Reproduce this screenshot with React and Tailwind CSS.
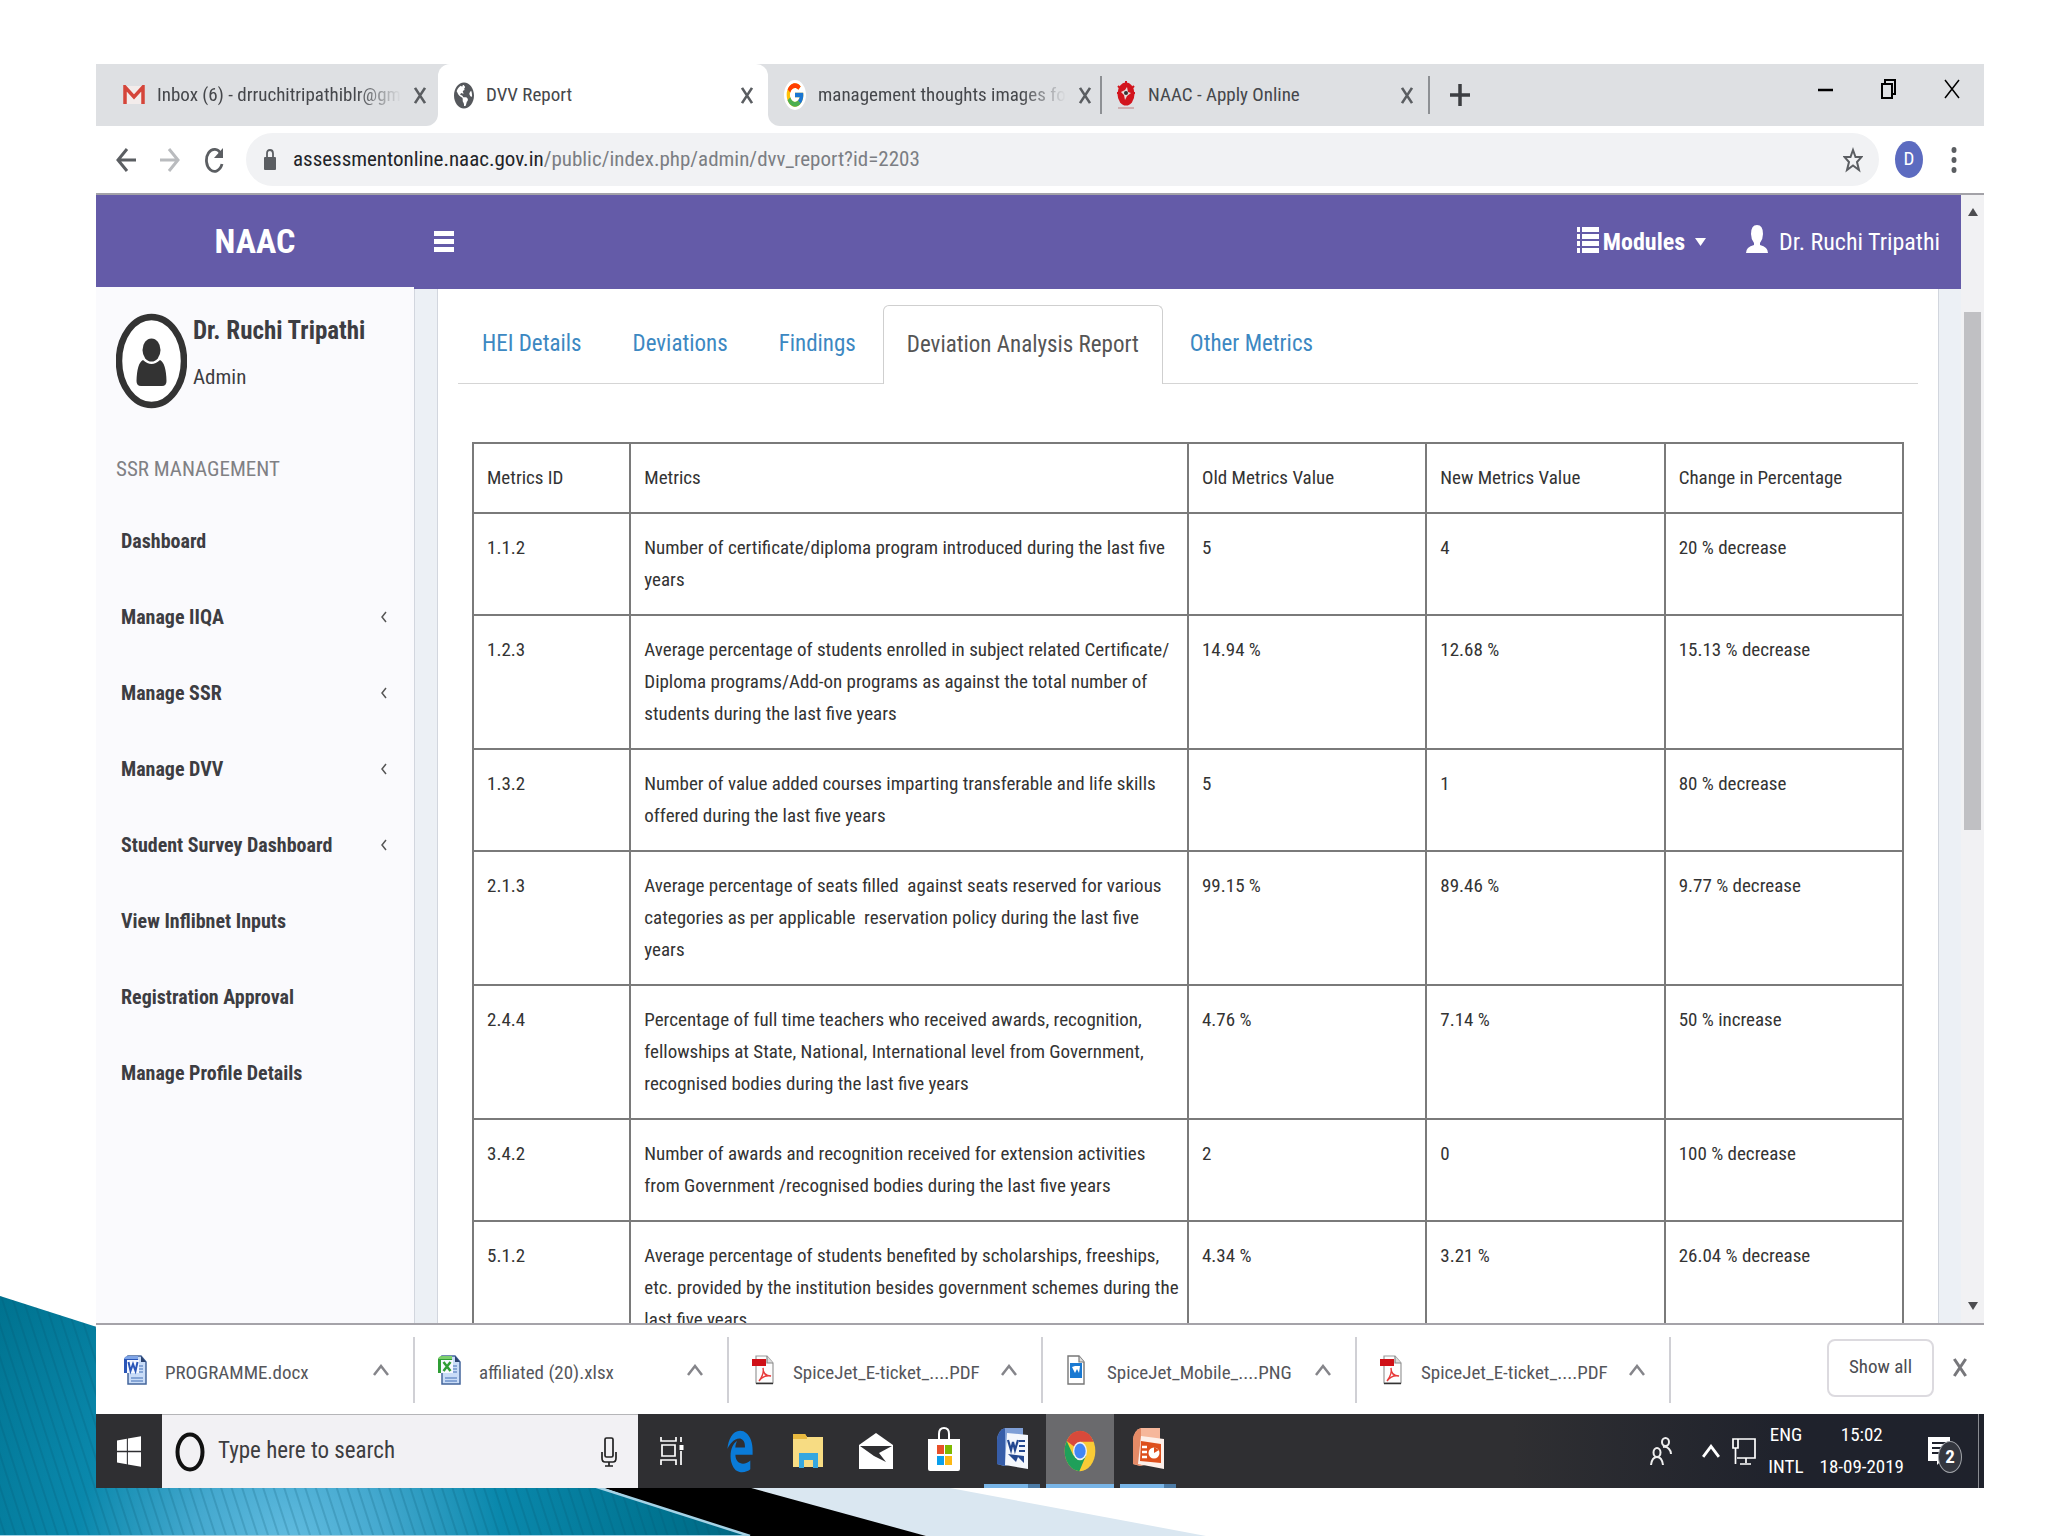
import { useState } from 'react'
import { FcGoogle } from 'react-icons/fc'
import { FaEdgeLegacy, FaGlobeAmericas, FaWindows } from 'react-icons/fa'

const sidebarItems = [
    { label: "Dashboard" },
    { label: "Manage IIQA", children: true },
    { label: "Manage SSR", children: true },
    { label: "Manage DVV", children: true },
    { label: "Student Survey Dashboard", children: true },
    { label: "View Inflibnet Inputs" },
    { label: "Registration Approval" },
    { label: "Manage Profile Details" },
]

const reportTabs = ["HEI Details", "Deviations", "Findings", "Deviation Analysis Report", "Other Metrics"]

const metrics = [
    { id: "1.1.2", name: "Number of certificate/diploma program introduced during the last five years", before: "5", after: "4", change: "20 % decrease" },
    { id: "1.2.3", name: "Average percentage of students enrolled in subject related Certificate/ Diploma programs/Add-on programs as against the total number of students during the last five years", before: "14.94 %", after: "12.68 %", change: "15.13 % decrease" },
    { id: "1.3.2", name: "Number of value added courses imparting transferable and life skills offered during the last five years", before: "5", after: "1", change: "80 % decrease" },
    { id: "2.1.3", name: "Average percentage of seats filled  against seats reserved for various categories as per applicable  reservation policy during the last five years", before: "99.15 %", after: "89.46 %", change: "9.77 % decrease" },
    { id: "2.4.4", name: "Percentage of full time teachers who received awards, recognition, fellowships at State, National, International level from Government, recognised bodies during the last five years", before: "4.76 %", after: "7.14 %", change: "50 % increase" },
    { id: "3.4.2", name: "Number of awards and recognition received for extension activities from Government /recognised bodies during the last five years", before: "2", after: "0", change: "100 % decrease" },
    { id: "5.1.2", name: "Average percentage of students benefited by scholarships, freeships, etc. provided by the institution besides government schemes during the last five years", before: "4.34 %", after: "3.21 %", change: "26.04 % decrease" },
]

const downloads = [
    { name: "PROGRAMME.docx", icon: <OfficeFileIcon letter="W" color="#2a56b8" light="#7ea4e6" /> },
    { name: "affiliated (20).xlsx", icon: <OfficeFileIcon letter="X" color="#2f9e35" light="#7ccf6c" /> },
    { name: "SpiceJet_E-ticket_....PDF", icon: <PdfIcon /> },
    { name: "SpiceJet_Mobile_....PNG", icon: <PngIcon /> },
    { name: "SpiceJet_E-ticket_....PDF", icon: <PdfIcon /> },
]

function OfficeFileIcon({ letter, color, light }) {
    return (
        <svg className="h-[30px] w-6 shrink-0" viewBox="0 0 24 30" aria-hidden="true">
            <path d="M5 1H18L23 7V29H5Z" fill="#c9dcf7" stroke="#44659c" strokeWidth="1.5" />
            <path d="M18 1V7H23Z" fill="#2b4370" />
            <path d="M15 11H20M15 14H20M15 17H20M8 23H20M8 26H20" stroke="#6f93cc" strokeWidth="1.3" />
            <path d="M1 4Q2 1 6 1H15V18H1Z" fill={color} />
            <path d="M1 4Q2 1 6 1H15V4Z" fill={light} />
            <rect x="4" y="5" width="12" height="13" fill="#f6f9ff" />
            {letter == "W"
                ? <path d="M5.500 7L7.500 16L10 9L12.500 16L14.500 7" fill="none" stroke={color} strokeWidth="2" />
                : <path d="M6.500 7L13.500 16M13.500 7L6.500 16" fill="none" stroke={color} strokeWidth="2.500" />}
        </svg>
    )
}

function PdfIcon() {
    return (
        <svg className="h-[30px] w-6 shrink-0" viewBox="0 0 24 30" aria-hidden="true">
            <path d="M5 1H16L22 8V28H5Z" fill="#fdfdfd" stroke="#999" strokeWidth="1.2" />
            <path d="M16 1V8H22" fill="#ddd" stroke="#888" strokeWidth="1.2" />
            <path d="M5 28.500H22" stroke="#333" strokeWidth="1.500" />
            <rect x="1" y="4" width="14" height="7" fill="#cf1017" />
            <path d="M8 26C11 22 13 17 12 13C12 18 15 21 20 21C15 20 11 22 8 26Z" fill="none" stroke="#e83a3a" strokeWidth="1.400" />
        </svg>
    )
}

function PngIcon() {
    return (
        <svg className="h-[30px] w-6 shrink-0" viewBox="0 0 24 30" aria-hidden="true">
            <path d="M3 1H14L19 7V29H3Z" fill="#fff" stroke="#777" strokeWidth="1.400" />
            <path d="M14 1V7H19" fill="#ddd" stroke="#777" strokeWidth="1.200" />
            <rect x="5" y="8" width="12" height="15" fill="#1979d2" />
            <path d="M7 12L10 11L15 11L14 18L12 14L10 18Z" fill="#fff" />
        </svg>
    )
}

function CloseIcon({ className }) {
    return (
        <svg className={className} viewBox="0 0 14 18" preserveAspectRatio="none" fill="none" stroke="currentColor" aria-hidden="true">
            <path d="M2 1L12 17M12 1L2 17" strokeWidth="2.600" />
        </svg>
    )
}

function CaretUp({ className }) {
    return (
        <svg className={className} viewBox="0 0 16 12" preserveAspectRatio="none" fill="none" stroke="currentColor" aria-hidden="true">
            <path d="M1 11L8 2L15 11" strokeWidth="2.500" />
        </svg>
    )
}

function SlideBackground() {
    return (
        <svg className="absolute bottom-0 left-0 h-60 w-[1210px]" viewBox="0 0 1210 240" aria-hidden="true">
            <defs>
                <radialGradient id="teal" gradientUnits="userSpaceOnUse" cx="290" cy="250" r="470">
                    <stop offset="0" stopColor="#62bce0" />
                    <stop offset="0.2" stopColor="#45a9cf" />
                    <stop offset="0.45" stopColor="#0a88ac" />
                    <stop offset="0.8" stopColor="#007390" />
                    <stop offset="1" stopColor="#006680" />
                </radialGradient>
                <pattern id="stripes" width="10" height="10" patternUnits="userSpaceOnUse" patternTransform="rotate(-18)">
                    <path d="M1 0V10" stroke="#03506a" strokeOpacity="0.3" strokeWidth="1.300" />
                </pattern>
            </defs>
            <path d="M730 192L926 240H1206L950 192Z" fill="#dae7f1" />
            <path d="M590 187H733L926 240H740Z" fill="#000" />
            <path d="M0 0L750 240H0Z" fill="url(#teal)" />
            <path d="M0 0L750 240H0Z" fill="url(#stripes)" />
            <path d="M96 31L750 240" stroke="#a5d3e6" strokeWidth="2.500" />
            <path d="M0 239.500H750" stroke="#9fd0e3" />
        </svg>
    )
}

function BrowserTab({ icon, title, faded }) {
    return (
        <>
            {icon}
            <span className={faded ? "flex-1 whitespace-nowrap [mask-image:linear-gradient(to_right,black_82%,transparent)]" : "flex-1 whitespace-nowrap"}>{title}</span>
            <button aria-label={"Close " + title}><CloseIcon className="h-[17px] w-[14px] text-[#5a5d61]" /></button>
        </>
    )
}

function TabStrip() {
    return (
        <div className="flex h-[62px] shrink-0 bg-white text-[19px] text-[#45474b]">
            <div className="flex w-[342px] items-center gap-3 rounded-br-xl bg-[#dee0e3] pr-[14px] pl-[27px]">
                <BrowserTab faded title="Inbox (6) - drruchitripathiblr@gm" icon={
                    <svg className="h-[20px] w-[22px] shrink-0" viewBox="0 0 22 20" aria-hidden="true">
                        <path d="M2 1H20V19H2Z" fill="#f3eceb" />
                        <path d="M2 19V2L11 12L20 2V19" fill="none" stroke="#d5453a" strokeWidth="3.500" />
                    </svg>
                } />
            </div>
            <div className="w-[330px] bg-[#dee0e3]">
                <div className="flex h-full items-center gap-3 rounded-t-xl bg-white pr-[14px] pl-4">
                    <BrowserTab title="DVV Report" icon={<FaGlobeAmericas className="h-[27px] w-5 shrink-0 text-[#55585c]" preserveAspectRatio="none" />} />
                </div>
            </div>
            <div className="flex flex-1 rounded-bl-xl bg-[#dee0e3]">
                <div className="flex w-[332px] items-center gap-3 pr-[15px] pl-4">
                    <BrowserTab faded title="management thoughts images fo" icon={
                        <span className="flex h-[30px] w-[22px] shrink-0 items-center justify-center rounded-[50%] bg-white"><FcGoogle className="h-[28px] w-[20px]" preserveAspectRatio="none" /></span>
                    } />
                </div>
                <div className="my-3 flex w-[330px] items-center gap-3 border-x-2 border-[#8d9094] px-[14px]">
                    <BrowserTab title="NAAC - Apply Online" icon={
                        <svg className="h-7 w-5 shrink-0" viewBox="0 0 20 28" aria-hidden="true">
                            <ellipse cx="10" cy="13" rx="8.500" ry="11.500" fill="#d2141d" />
                            <path d="M10 0V3M2 5L4 7M18 5L16 7M1 12H3M17 12H19" stroke="#d2141d" strokeWidth="2" />
                            <path d="M5 11L9 9L11 6L12 11L15 12L11 15L9 19L8 14Z" fill="#e9dcdc" />
                            <circle cx="10" cy="12" r="2" fill="#333" />
                            <path d="M2 27H18" stroke="#c9a0a2" strokeWidth="1.500" />
                        </svg>
                    } />
                </div>
                <button className="ml-5 self-center" aria-label="New tab">
                    <svg className="h-[22px] w-5" viewBox="0 0 20 22" aria-hidden="true"><path d="M10 0V22M0 11H20" stroke="#3c3e42" strokeWidth="3.500" /></svg>
                </button>
                <div className="mr-6 mb-3 ml-auto flex items-center gap-12 text-black">
                    <button aria-label="Minimize"><svg className="h-5 w-[15px]" viewBox="0 0 15 20" aria-hidden="true"><path d="M0 11H15" stroke="#000" strokeWidth="2.500" /></svg></button>
                    <button aria-label="Restore">
                        <svg className="h-5 w-[15px]" viewBox="0 0 15 20" fill="none" stroke="#000" strokeWidth="2" aria-hidden="true">
                            <path d="M1 5H11V19H1ZM4 5V1H14V15H11" />
                        </svg>
                    </button>
                    <button aria-label="Close"><svg className="h-5 w-[16px]" viewBox="0 0 16 20" aria-hidden="true"><path d="M1 1L15 19M15 1L1 19" stroke="#000" strokeWidth="1.500" /></svg></button>
                </div>
            </div>
        </div>
    )
}

function Toolbar() {
    const [path, setPath] = useState("/public/index.php/admin/dvv_report?id=2203")

    return (
        <div className="flex h-[69px] shrink-0 items-center border-b-2 border-[#a3a2a8] bg-white pl-5">
            <button aria-label="Back">
                <svg className="h-[26px] w-5" viewBox="0 0 20 26" fill="none" stroke="#5b5e62" strokeWidth="3" aria-hidden="true"><path d="M20 13H2M11 2L2 13L11 24" /></svg>
            </button>
            <button className="ml-6" aria-label="Forward">
                <svg className="h-[26px] w-5" viewBox="0 0 20 26" fill="none" stroke="#b9bbbe" strokeWidth="3" aria-hidden="true"><path d="M0 13H18M9 2L18 13L9 24" /></svg>
            </button>
            <button className="ml-6" aria-label="Reload">
                <svg className="h-[26px] w-5" viewBox="0 0 20 26" fill="none" aria-hidden="true">
                    <path d="M17 7A8 11 0 1 0 18 17" stroke="#5b5e62" strokeWidth="2.800" />
                    <path d="M19 1V11H10Z" fill="#5b5e62" />
                </svg>
            </button>
            <div className="ml-[22px] flex h-[53px] flex-1 items-center rounded-full bg-[#f1f2f4] pr-4 pl-[18px] text-[21px]">
                <svg className="mr-[17px] h-[22px] w-3 shrink-0" viewBox="0 0 12 22" aria-hidden="true">
                    <rect x="0" y="8" width="12" height="13" rx="1" fill="#5b5e62" />
                    <path d="M3 9V4.500Q3 1 6 1T9 4.500V9" fill="none" stroke="#5b5e62" strokeWidth="1.800" />
                </svg>
                <label htmlFor="address" className="text-[#222428]">assessmentonline.naac.gov.in</label>
                <input id="address" className="flex-1 bg-transparent text-[#7b7e83] outline-none" value={path} onChange={(e) => setPath(e.target.value)} />
                <button aria-label="Bookmark this page">
                    <svg className="h-[26px] w-5" viewBox="0 0 20 26" fill="none" stroke="#5b5e62" strokeWidth="2" aria-hidden="true"><path d="M10 3L12.500 10H18.500L14 15L16 23L10 18.500L4 23L6 15L1.500 10H7.500Z" /></svg>
                </button>
            </div>
            <button className="ml-4 h-[37px] w-7 rounded-[50%] bg-[#5c6bc0] text-[19px] text-white">D</button>
            <button className="mr-[27px] ml-7" aria-label="Menu">
                <svg className="h-[26px] w-[6px]" viewBox="0 0 6 26" fill="#5b5e62" aria-hidden="true"><ellipse cx="3" cy="3" rx="2.500" ry="3" /><ellipse cx="3" cy="13" rx="2.500" ry="3" /><ellipse cx="3" cy="23" rx="2.500" ry="3" /></svg>
            </button>
        </div>
    )
}

function Sidebar() {
    return (
        <aside className="flex w-[318px] shrink-0 flex-col bg-[#fafafd]">
            <a href="#" className="flex h-[92px] shrink-0 items-center justify-center bg-[#645ba8] text-[34px] font-bold text-white">NAAC</a>
            <div className="flex flex-col pt-[26px] pl-5 text-[#3d3d42]">
                <div className="flex gap-[6px]">
                    <svg className="h-24 w-[71px]" viewBox="0 0 71 96" aria-hidden="true">
                        <ellipse cx="35.500" cy="48" rx="32.500" ry="44" fill="#fff" stroke="#333" strokeWidth="6.500" />
                        <ellipse cx="35.500" cy="37" rx="9" ry="11.500" fill="#333" />
                        <path d="M27 47Q35.500 55 44 47Q50 50 50.500 68Q50.500 73 46 73H25Q20.500 73 20.500 68Q21 50 27 47Z" fill="#333" />
                    </svg>
                    <div>
                        <p className="text-[25px] leading-[36px] font-bold">Dr. Ruchi Tripathi</p>
                        <p className="mt-4 text-[21px] leading-6">Admin</p>
                    </div>
                </div>
                <h2 className="mt-10 text-[21px] leading-[40px] text-[#808084]">SSR MANAGEMENT</h2>
                <nav className="mt-[14px] pr-[27px] pl-[5px]">
                    {sidebarItems.map((item) => (
                        <a key={item.label} href="#" className="flex h-[76px] items-center justify-between text-[20px] font-bold">
                            {item.label}
                            {item.children && <svg className="h-3 w-[6px]" viewBox="0 0 6 12" fill="none" stroke="#555" strokeWidth="1.500" aria-hidden="true"><path d="M5 1L1 6L5 11" /></svg>}
                        </a>
                    ))}
                </nav>
            </div>
        </aside>
    )
}

function Header() {
    return (
        <header className="flex h-[94px] shrink-0 items-center bg-[#645ba8] pr-[21px] pl-5 text-[24px] text-white">
            <button aria-label="Toggle sidebar">
                <svg className="h-[22px] w-5" viewBox="0 0 20 22" fill="#fff" aria-hidden="true"><rect width="20" height="5" /><rect y="8" width="20" height="5" /><rect y="16" width="20" height="5" /></svg>
            </button>
            <button className="ml-auto flex items-center font-bold">
                <svg className="mr-1 mb-1 h-[26px] w-[22px]" viewBox="0 0 22 26" fill="#fff" aria-hidden="true">
                    <path d="M0 0H3V5H0ZM5 0H22V5H5ZM0 7H3V12H0ZM5 7H22V12H5ZM0 14H3V19H0ZM5 14H22V19H5ZM0 21H3V26H0ZM5 21H22V26H5Z" />
                </svg>
                Modules
                <svg className="ml-[10px] h-2 w-[11px]" viewBox="0 0 11 8" fill="#fff" aria-hidden="true"><path d="M0 0H11L5.500 8Z" /></svg>
            </button>
            <button className="ml-10 flex items-center gap-[11px]">
                <svg className="mb-[6px] h-7 w-[22px]" viewBox="0 0 22 28" fill="#fff" aria-hidden="true">
                    <path d="M11 0Q17 0 17 9Q17 14 14 18V20Q22 22 22 28H0Q0 22 8 20V18Q5 14 5 9Q5 0 11 0Z" />
                </svg>
                Dr. Ruchi Tripathi
            </button>
        </header>
    )
}

function Report() {
    const [active, setActive] = useState("Deviation Analysis Report")

    return (
        <main className="min-h-0 flex-1 overflow-hidden border-l border-[#d2d6de] bg-[#ecf0f5] px-[22px]">
            <div className="h-full border-x border-[#d2d6de] bg-white px-5 pt-4">
                <div className="flex gap-[3px] border-b border-[#d5d5d5] text-[23px]" role="tablist">
                    {reportTabs.map((tab) => (
                        <button key={tab} role="tab" aria-selected={tab == active} onClick={() => setActive(tab)} className={tab == active ? "-mb-px h-[79px] rounded-t-md border border-b-0 border-[#cfcfcf] bg-white px-[23px] text-[#555]" : "h-[78px] border border-transparent px-[23px] text-[#3c88c2]"}>{tab}</button>
                    ))}
                </div>
                <div className="mt-[58px] pr-[14px] pl-[14px]">
                    <table className="w-full table-fixed border-collapse text-left text-[19px] leading-8 text-[#333] [&_td]:border-2 [&_td]:border-[#7a7a7a] [&_td]:py-[18px] [&_td]:pr-1 [&_td]:pl-[13px] [&_th]:border-2 [&_th]:border-[#7a7a7a] [&_th]:py-[18px] [&_th]:pl-[13px] [&_th]:font-normal">
                        <thead>
                            <tr>
                                <th className="w-[11%]">Metrics ID</th>
                                <th className="w-[39%]">Metrics</th>
                                <th>Old Metrics Value</th>
                                <th>New Metrics Value</th>
                                <th>Change in Percentage</th>
                            </tr>
                        </thead>
                        <tbody>
                            {metrics.map((m) => (
                                <tr key={m.id} className="align-top">
                                    <td>{m.id}</td>
                                    <td className="whitespace-pre-wrap">{m.name}</td>
                                    <td>{m.before}</td>
                                    <td>{m.after}</td>
                                    <td>{m.change}</td>
                                </tr>
                            ))}
                        </tbody>
                    </table>
                </div>
            </div>
        </main>
    )
}

function Scrollbar() {
    return (
        <div className="flex w-[23px] shrink-0 flex-col items-center bg-[#f1f1f3]">
            <svg className="my-[13px] h-2 w-[10px] shrink-0" viewBox="0 0 10 8" fill="#4d4d50" aria-hidden="true"><path d="M0 8L5 0L10 8Z" /></svg>
            <div className="flex w-full flex-1 flex-col px-[3px] pt-[83px]">
                <div className="h-[53%] bg-[#c0c0c3]"></div>
            </div>
            <svg className="my-[13px] h-2 w-[10px] shrink-0" viewBox="0 0 10 8" fill="#4d4d50" aria-hidden="true"><path d="M0 0H10L5 8Z" /></svg>
        </div>
    )
}

function DownloadBar() {
    return (
        <div className="flex h-[91px] shrink-0 items-center border-t-2 border-[#a5a3a9] bg-white pl-[5px] text-[19px] text-[#55565b]">
            {downloads.map((file, i) => (
                <div key={i} className="flex h-[66px] w-[314px] items-center border-r-2 border-[#d0d0d5] pr-6 pl-[22px]">
                    {file.icon}
                    <a href="#" className="ml-[18px] pt-2">{file.name}</a>
                    <button className="ml-auto" aria-label={"Options for " + file.name}><CaretUp className="h-3 w-4 text-[#85858a]" /></button>
                </div>
            ))}
            <div className="mr-4 mb-1 ml-auto flex items-center gap-[18px]">
                <button className="h-[58px] w-[107px] rounded-lg border-2 border-[#dcdadf] text-[#4c4d52]">Show all</button>
                <button aria-label="Close downloads"><CloseIcon className="h-[19px] w-4 text-[#77777b]" /></button>
            </div>
        </div>
    )
}

function TaskButton({ label, active, running, children }) {
    return (
        <button aria-label={label} className={active ? "relative flex w-[68px] items-center justify-center bg-[#6a6a6d]" : "relative flex w-[68px] items-center justify-center"}>
            {children}
            {active && <span className="absolute inset-x-0 bottom-0 h-1 bg-[#78b4e6]"></span>}
            {running && <span className="absolute inset-x-[6px] bottom-0 h-1 border-r-[12px] border-[#4c7ba6] bg-[#78b4e6]"></span>}
        </button>
    )
}

function Taskbar() {
    return (
        <footer className="flex h-[74px] shrink-0 bg-linear-to-r from-[#2f2f32] from-75% to-[#1f222c] to-90% text-white">
            <button className="flex w-[66px] items-center justify-center" aria-label="Start"><FaWindows className="h-[35px] w-6" preserveAspectRatio="none" /></button>
            <div className="flex w-[476px] items-center border-t border-[#b5b5b8] bg-[#f2f1f4] pr-[21px] pl-3">
                <svg className="h-[42px] w-8 shrink-0" viewBox="0 0 32 42" aria-hidden="true"><ellipse cx="16" cy="21" rx="12.500" ry="17.500" fill="none" stroke="#111" strokeWidth="4" /></svg>
                <input type="text" aria-label="Type here to search" placeholder="Type here to search" className="ml-3 min-w-0 flex-1 bg-transparent text-[23px] outline-none placeholder:text-[#3d3d40]" />
                <svg className="h-[30px] w-4 shrink-0" viewBox="0 0 16 30" fill="none" stroke="#222" strokeWidth="1.700" aria-hidden="true">
                    <rect x="4" y="1" width="8" height="19" rx="1.500" />
                    <path d="M1 15V21Q1 25 4 25H12Q15 25 15 21V15M8 25V29M4 29H12" />
                </svg>
            </div>
            <TaskButton label="Task view">
                <svg className="h-7 w-6" viewBox="0 0 24 28" fill="none" stroke="#fff" strokeWidth="1.700" aria-hidden="true">
                    <path d="M1 0V4H16V0M1 28V23H16V28M2 8H15V19H2ZM21 0V5M21 14V28" />
                    <rect x="19.500" y="8" width="4" height="5" fill="#fff" stroke="none" />
                </svg>
            </TaskButton>
            <TaskButton label="Microsoft Edge"><FaEdgeLegacy className="h-[43px] w-7 text-[#0a7bd8]" preserveAspectRatio="none" /></TaskButton>
            <TaskButton label="File Explorer">
                <svg className="h-[34px] w-[30px]" viewBox="0 0 30 34" aria-hidden="true">
                    <path d="M0 0H12L14 3H30V33H0Z" fill="#f7dc83" />
                    <path d="M0 0H12L14 3V5H0Z" fill="#e8b93f" />
                    <path d="M6 34V19H25V34H20V26H11V34Z" fill="#35a7e0" />
                </svg>
            </TaskButton>
            <TaskButton label="Mail">
                <svg className="h-[36px] w-[34px]" viewBox="0 0 34 36" aria-hidden="true">
                    <path d="M0 12L17 0L34 12V36H0Z" fill="#fff" />
                    <path d="M1 13H33L20 20L27 29L15 23Z" fill="#2f2f32" />
                </svg>
            </TaskButton>
            <TaskButton label="Microsoft Store">
                <svg className="mb-1 h-11 w-8" viewBox="0 0 32 44" aria-hidden="true">
                    <path d="M11 12V7Q11 1 16 1T21 7V12" fill="none" stroke="#fff" strokeWidth="2" />
                    <path d="M0 12H32V42Q32 44 30 44H2Q0 44 0 42Z" fill="#fff" />
                    <rect x="9" y="18" width="7" height="9" fill="#e8502a" /><rect x="17" y="18" width="7" height="9" fill="#7fb900" />
                    <rect x="9" y="29" width="7" height="9" fill="#0a9fec" /><rect x="17" y="29" width="7" height="9" fill="#fcb813" />
                </svg>
            </TaskButton>
            <TaskButton label="Word" running>
                <svg className="mb-1 h-[42px] w-8" viewBox="0 0 32 42" aria-hidden="true">
                    <path d="M1 36V12Q2 2 9 0H27V34L8 38Z" fill="#7f9fd6" />
                    <path d="M1 36V12Q2 2 9 0V38Z" fill="#365da8" />
                    <path d="M11 5L32 7V41L9 37Z" fill="#f4f7fc" />
                    <path d="M12 12L15 22L17 14L19 22L22 12M23 13H29M23 18H29M23 23H29" fill="none" stroke="#23478f" strokeWidth="2.200" />
                    <path d="M12 26L28 28V35L22 29L20 34L12 26Z" fill="#23478f" />
                </svg>
            </TaskButton>
            <TaskButton label="Chrome" active>
                <svg className="h-[42px] w-8" viewBox="0 0 48 48" preserveAspectRatio="none" aria-hidden="true">
                    <circle cx="24" cy="24" r="23" fill="#f9cb36" />
                    <path d="M24 24L4 12.500A23 23 0 0 1 44.500 13.500H24Z" fill="#d84a3b" />
                    <path d="M4 12.500A23 23 0 0 0 23 47L33 29L24 24L14 29Z" fill="#1fa05a" />
                    <circle cx="24" cy="24" r="10.500" fill="#f1f1f1" />
                    <circle cx="24" cy="24" r="8.500" fill="#4286f4" />
                </svg>
            </TaskButton>
            <TaskButton label="PowerPoint" running>
                <svg className="mb-1 h-[42px] w-8" viewBox="0 0 32 42" aria-hidden="true">
                    <path d="M1 36V12Q2 2 9 0H28V34L8 38Z" fill="#f6b79b" />
                    <path d="M1 36V12Q2 2 9 0V38Z" fill="#e48a66" />
                    <path d="M9 8L32 11V41L6 36Z" fill="#fdf0ea" />
                    <path d="M9 13L29 16V35L8 33Z" fill="#dd4f1c" />
                    <circle cx="22" cy="25" r="5.500" fill="#fff" />
                    <path d="M22 25V19L27 22Z" fill="#dd4f1c" />
                    <path d="M10 19H15M10 24H15M10 29H15" stroke="#fff" strokeWidth="2.500" />
                </svg>
            </TaskButton>
            <div className="ml-auto flex items-center text-[19px]">
                <button aria-label="People">
                    <svg className="h-7 w-[22px]" viewBox="0 0 22 28" fill="none" stroke="#eee" strokeWidth="2" aria-hidden="true">
                        <ellipse cx="15.500" cy="5" rx="3.500" ry="4" /><path d="M13 10Q17 9 19 12Q21 14 21 17" />
                        <ellipse cx="7" cy="15.500" rx="3.500" ry="4.500" /><path d="M1 28Q2 20 7 20T13 28" />
                    </svg>
                </button>
                <button className="ml-[30px]" aria-label="Show hidden icons"><CaretUp className="h-[14px] w-[18px]" /></button>
                <button className="ml-3" aria-label="Network">
                    <svg className="h-7 w-6" viewBox="0 0 24 28" fill="none" stroke="#fff" strokeWidth="1.700" aria-hidden="true">
                        <path d="M6 2H23V21H5M14 21V26M8 27H19M1 2H6V11H1ZM3.500 11V27" />
                    </svg>
                </button>
                <p className="ml-3 text-center leading-8">ENG<br />INTL</p>
                <p className="ml-4 text-center leading-8">15:02<br />18-09-2019</p>
                <button className="relative mr-4 ml-6 h-[44px] w-[34px] text-left" aria-label="Notifications">
                    <svg className="h-7 w-[22px]" viewBox="0 0 22 28" aria-hidden="true">
                        <path d="M0 0H22V24H13L9 28V24H0Z" fill="#fff" />
                        <path d="M4 6H18M4 11H18M4 16H14" stroke="#1f222c" strokeWidth="2" />
                    </svg>
                    <span className="absolute right-0 bottom-0 flex h-[32px] w-6 items-center justify-center rounded-[50%] border border-[#a0a3a8] bg-[#34373f] font-bold">2</span>
                </button>
                <span className="mr-[5px] h-[74px] w-px bg-[#8a8c92]"></span>
            </div>
        </footer>
    )
}

export default function App() {
    return (
        <div className="relative flex h-screen overflow-hidden bg-white pt-16 pr-16 pb-12 pl-24 font-['Roboto_Condensed',Roboto,'Liberation_Sans',sans-serif]">
            <SlideBackground />
            <div className="relative flex min-w-0 flex-1 flex-col">
                <TabStrip />
                <Toolbar />
                <div className="flex min-h-0 flex-1 overflow-hidden bg-white">
                    <Sidebar />
                    <div className="flex min-w-0 flex-1 flex-col">
                        <Header />
                        <Report />
                    </div>
                    <Scrollbar />
                </div>
                <DownloadBar />
                <Taskbar />
            </div>
        </div>
    )
}
